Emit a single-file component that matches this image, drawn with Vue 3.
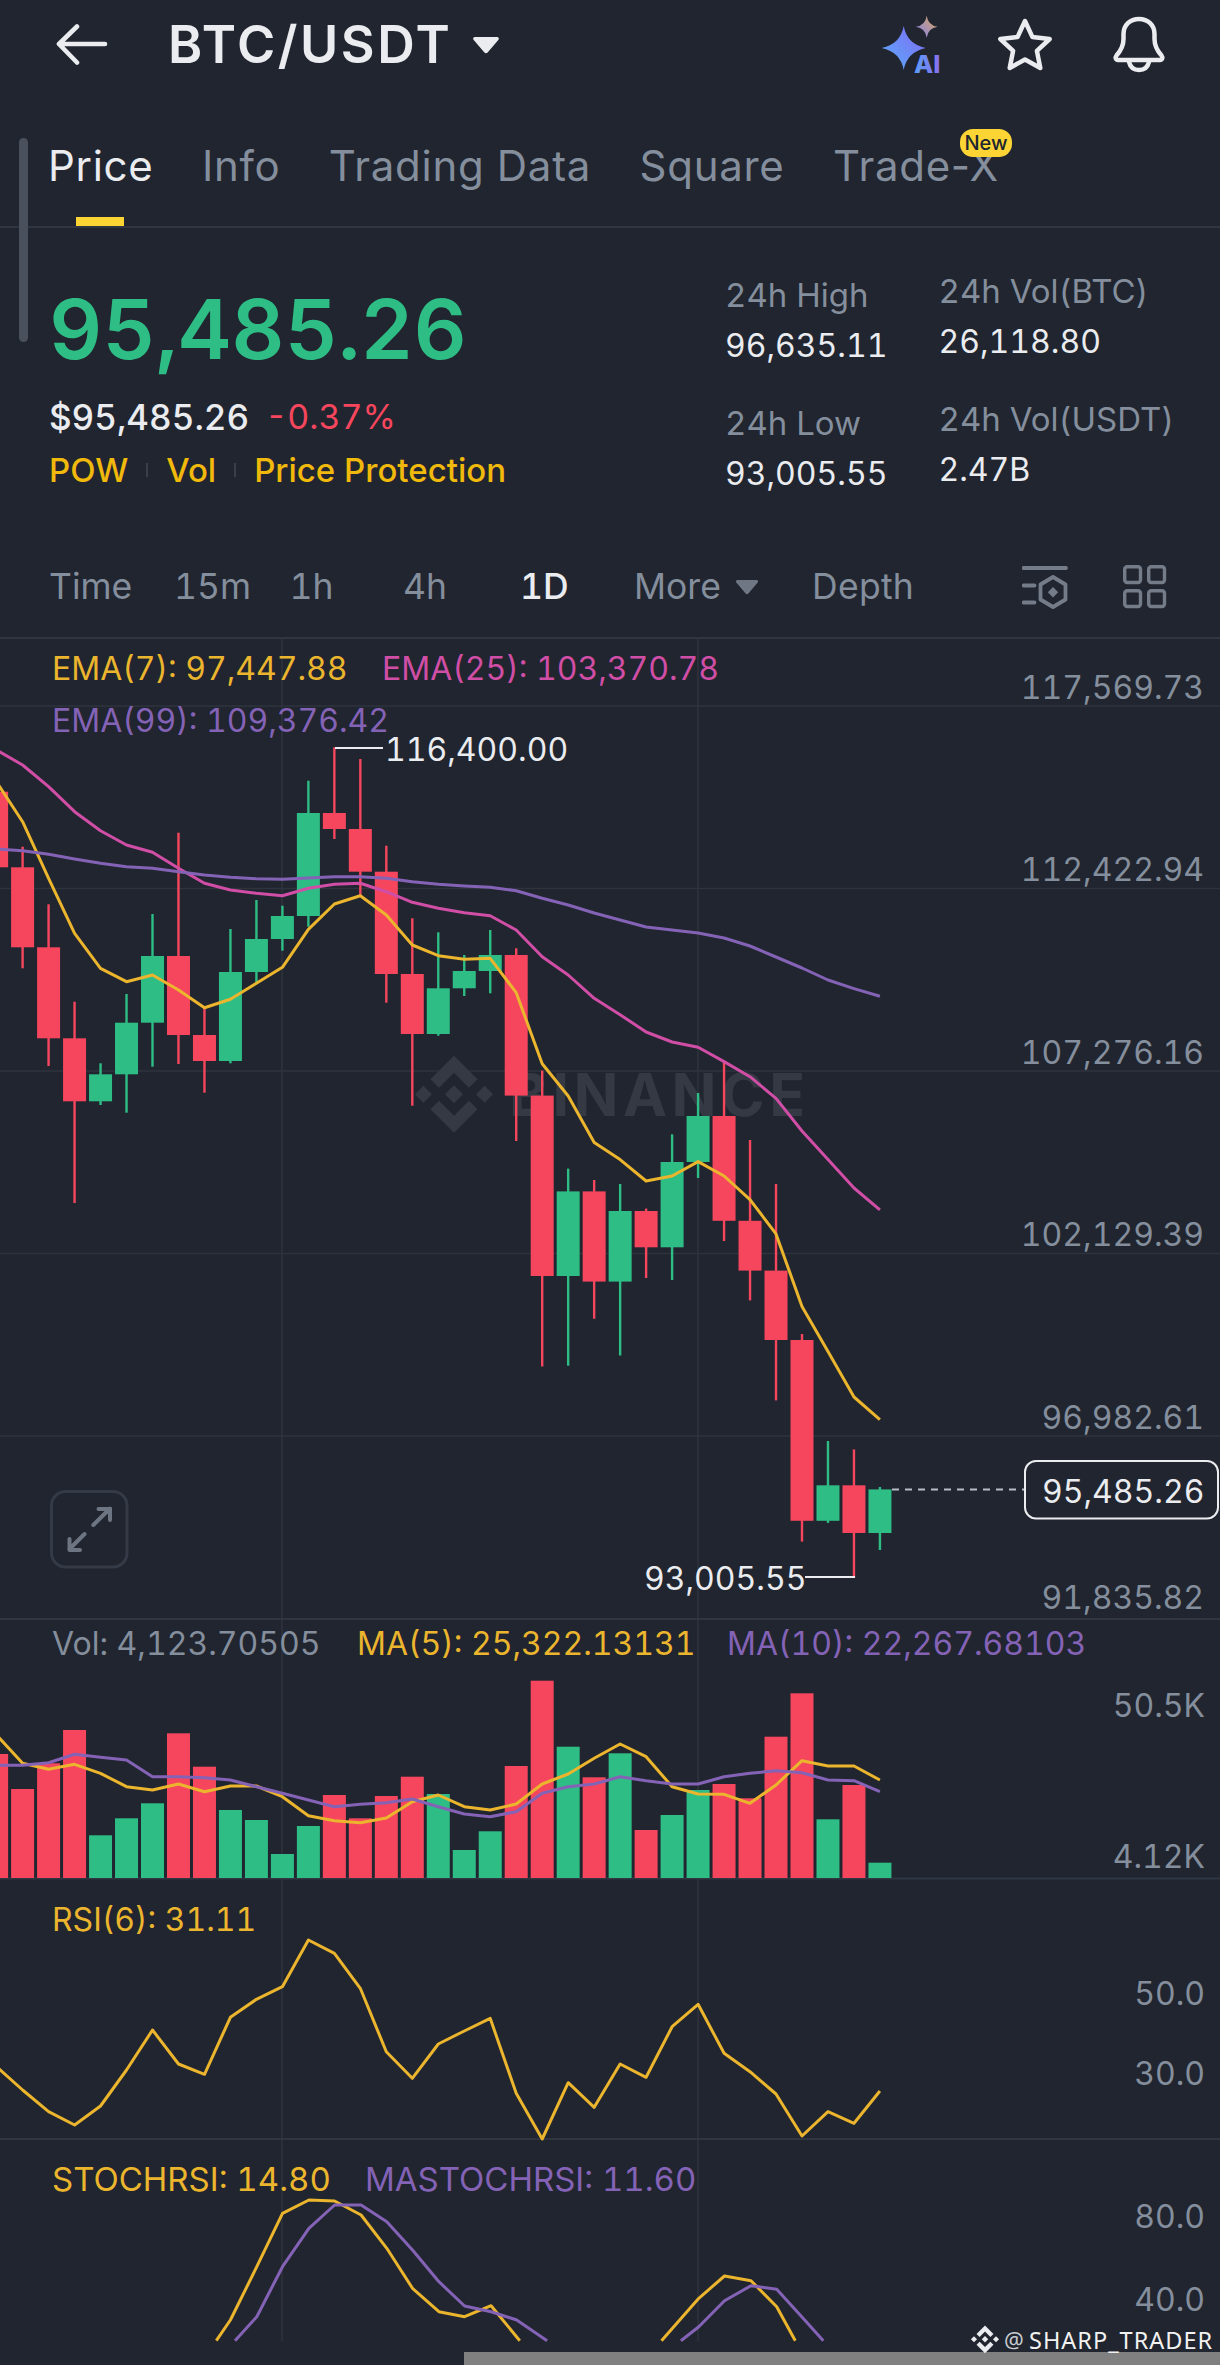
<script setup>
const X = i => 22.6 + 25.98 * (i - 1)
const red = 'r', green = 'g'
const candles = [
  [red, 783, 867, 791.7, 867.3, 1754],
  [red, 846.7, 968.3, 867.3, 947.3, 1789],
  [red, 904.3, 1066, 947.3, 1038.3, 1763.3],
  [red, 1001.7, 1203, 1038.3, 1101.3, 1730],
  [green, 1063.3, 1105, 1074.3, 1101.3, 1835.3],
  [green, 994, 1112.7, 1022.7, 1074.3, 1818.3],
  [green, 914, 1066.7, 956, 1022.7, 1803.3],
  [red, 832.7, 1064, 956, 1035, 1733.3],
  [red, 1006.7, 1092.7, 1035, 1061, 1766.7],
  [green, 929, 1063.3, 972, 1061, 1810],
  [green, 900, 983.3, 939, 972, 1820],
  [green, 905.7, 950.7, 916, 939, 1854],
  [green, 780.7, 926.7, 813, 916, 1826],
  [red, 747.3, 839, 813, 829, 1795],
  [red, 759, 896.7, 829, 871.7, 1818.3],
  [red, 845.7, 1002.7, 871.7, 974, 1796],
  [red, 918.3, 1105.7, 974, 1034, 1776.7],
  [green, 932.3, 1035.7, 988.3, 1034, 1794],
  [green, 955, 996, 971, 988.3, 1850],
  [green, 930, 993.3, 955, 971, 1831.3],
  [red, 948.3, 1141, 955, 1095.6, 1766],
  [red, 1070.6, 1366.5, 1095.6, 1276, 1680.7],
  [green, 1168.6, 1365.7, 1191.4, 1276, 1746.7],
  [red, 1180, 1318.8, 1191.4, 1281.6, 1777.3],
  [green, 1184, 1355.5, 1211, 1281.6, 1753.3],
  [red, 1208.6, 1278, 1211, 1247.3, 1830],
  [green, 1134.3, 1280, 1162, 1247.3, 1815],
  [green, 1093, 1178, 1116, 1162, 1790],
  [red, 1061.6, 1241, 1116, 1220.8, 1784],
  [red, 1140, 1300.4, 1220.8, 1270.6, 1798.3],
  [red, 1184, 1400.4, 1270.6, 1340, 1736.7],
  [red, 1334, 1541.6, 1340, 1520.8, 1693.3],
  [green, 1441, 1522.9, 1485.3, 1520.8, 1819.3],
  [red, 1449.4, 1578, 1485.3, 1533, 1785],
  [green, 1487, 1550, 1489.4, 1533, 1862.7]
].map(([kind, wickTop, wickBot, bodyTop, bodyBot, volTop], i) => ({
  kind, x: X(i), wickTop, wickBot, bodyTop, bodyH: bodyBot - bodyTop, volTop
}))

const series = ys => ys.map((y, i) => `${X(i).toFixed(1)},${y}`).join(' ')
const ema7 = series([782,821.7,878.3,933.3,968.3,981.7,975,990,1007.7,999.3,983.3,967.3,929.3,904,895.7,915,945,955.7,959.3,958.3,992.7,1063.7,1096,1142.4,1159.6,1181,1176,1161.6,1176,1199.6,1233.9,1306.5,1351.4,1397,1419.6])
const ema25 = series([750,765,786.7,811.7,830.7,845,852.3,868.3,883.3,890,893.3,895.7,888.3,884.3,883.3,891.7,902.3,908.3,912.7,915.7,930,956.7,975,998.3,1014.7,1032,1042,1047.3,1061.6,1076.7,1098.4,1131,1159.6,1188,1209.8])
const ema99 = series([849,850.7,854.3,859,863.3,866.7,868.3,871.7,875,877.3,878.7,879.3,878,876.7,876.7,878.3,881.7,884.3,886,887.3,890.7,898.3,905,913,920,927,930,933,938,946,957,968,980,988.6,996.3])

const volY = z => +(1610 + z / 3).toFixed(1)
const ma5 = series([375,460,478,463,490,530,540,522,545,528,528,560,617,632,638,624,575,555,590,600,582,522,492,445,402,440,530,552,553,580,525,452,468,468,510].map(volY))
const ma10 = series([466,466,458,433,442,450,500,500,503,510,530,550,570,590,583,578,567,590,612,620,605,550,530,522,500,512,522,522,500,490,482,488,510,512,545].map(volY))

const rsiY = z => +(1890 + z / 3).toFixed(1)
const rsi = series([530,600,665,705,648,540,420,522,553,382,328,290,150,190,295,485,565,462,423,385,610,747,578,652,522,562,410,343,490,545,612,738,665,700,603].map(rsiY))
const free = list => list.map(([x, z]) => `${(x / 1.285).toFixed(1)},${rsiY(z)}`).join(' ')
const stochA = free([[278,1352],[296,1290],[330,1130],[363,970],[397,930],[430,933],[464,975],[497,1075],[530,1195],[564,1265],[597,1280],[631,1247],[668,1352]])
const stochB = free([[302,1352],[330,1280],[363,1130],[397,1015],[430,945],[464,945],[497,995],[530,1080],[564,1175],[597,1248],[631,1265],[664,1290],[703,1352]])
const stochC = free([[850,1352],[898,1225],[931,1158],[965,1172],[998,1250],[1022,1352]])
const stochD = free([[875,1352],[898,1310],[931,1232],[965,1187],[998,1198],[1032,1285],[1058,1352]])

const gridY = [706, 888.5, 1071, 1253.5, 1436]
const dividers = [1619, 1878.5, 2139]
const priceAxis = [
  ['117,569.73', 698.7], ['112,422.94', 881.2], ['107,276.16', 1063.7],
  ['102,129.39', 1246.2], ['96,982.61', 1428.7], ['91,835.82', 1608.5]
]
const otherAxis = [
  ['50.5K', 1716.5], ['4.12K', 1868], ['50.0', 2005], ['30.0', 2085], ['80.0', 2228], ['40.0', 2310.5]
]
</script>

<template>
  <div class="page">
    <span class="scroll-thumb"></span>

    <header class="top">
      <svg class="back" width="52" height="42" viewBox="0 0 52 42" fill="none">
        <path d="M49 20H3M21 2.5L3 20l18 18.5" stroke="#eaecef" stroke-width="4.6" stroke-linecap="round" stroke-linejoin="round" />
      </svg>
      <h1 class="pair">BTC/USDT</h1>
      <svg class="caret" width="28" height="18" viewBox="0 0 28 18">
        <path d="M3 1h22c1.6 0 2.4 1.6 1.5 2.8L15.6 16.4c-.8 1-2.4 1-3.2 0L1.5 3.8C.6 2.6 1.4 1 3 1z" fill="#eaecef" />
      </svg>
      <div class="actions">
        <svg width="68" height="66" viewBox="0 0 68 66">
          <defs>
            <linearGradient id="aiBig" x1="1" y1="0" x2="0" y2="1">
              <stop offset="0" stop-color="#8468f6" />
              <stop offset="1" stop-color="#56aef8" />
            </linearGradient>
            <linearGradient id="aiSmall" x1="1" y1="0" x2="0" y2="1">
              <stop offset="0" stop-color="#e2a95e" />
              <stop offset="1" stop-color="#7d7ff0" />
            </linearGradient>
            <linearGradient id="aiText" x1="0" y1="0" x2="1" y2="0">
              <stop offset="0" stop-color="#5b9ef8" />
              <stop offset="1" stop-color="#8a70f0" />
            </linearGradient>
          </defs>
          <path d="M26.7 14Q30 32 48.7 36 30 40 26.7 58 23.4 40 4.7 36 23.4 32 26.7 14Z" fill="url(#aiBig)" />
          <path d="M49.7 3.7Q51 13.500 60.700 14.700 51 16 49.700 25.700 48.400 16 38.700 14.700 48.400 13.500 49.700 3.700Z" fill="url(#aiSmall)" />
          <text class="ai-text" x="37" y="61" fill="url(#aiText)">AI</text>
        </svg>
        <svg class="star" width="60" height="60" viewBox="0 0 60 60" fill="none">
          <path d="M30 4l7.35 15.9L54.7 22 41.9 33.9 45.3 51 30 42.5 14.7 51l3.4-17.1L5.3 22l17.35-2.1z" stroke="#eaecef" stroke-width="4.5" stroke-linejoin="round" />
        </svg>
        <svg class="bell" width="56" height="60" viewBox="0 0 56 60" fill="none">
          <path d="M7 45H49C51.5 45 52 42.5 50.5 40.5 46.5 36 43.5 31 43.5 24V19C43.5 10 37 4 28 4 19 4 12.5 10 12.5 19V24C12.5 31 9.5 36 5.5 40.5 4 42.5 4.5 45 7 45Z" stroke="#eaecef" stroke-width="4.5" stroke-linejoin="round" />
          <path d="M18 47C19.5 53 24 55 28 55 32 55 36.5 53 38 47" stroke="#eaecef" stroke-width="4.5" stroke-linecap="round" />
        </svg>
      </div>
    </header>

    <nav class="tabs">
      <span class="tab active">Price</span>
      <span class="tab">Info</span>
      <span class="tab">Trading Data</span>
      <span class="tab">Square</span>
      <span class="tab">Trade-X<em class="badge">New</em></span>
    </nav>

    <section class="summary">
      <div class="headline">
        <div class="last">95,485.26</div>
        <div class="sub"><span class="usd">$95,485.26</span><span class="pct">-0.37%</span></div>
        <div class="tags">
          <span>POW</span><i></i><span>Vol</span><i></i><span>Price Protection</span>
        </div>
      </div>
      <div class="stats">
        <dl class="stat-col first">
          <dt>24h High</dt><dd>96,635.11</dd>
          <dt class="lower">24h Low</dt><dd>93,005.55</dd>
        </dl>
        <dl class="stat-col second">
          <dt>24h Vol(BTC)</dt><dd>26,118.80</dd>
          <dt class="lower">24h Vol(USDT)</dt><dd>2.47B</dd>
        </dl>
      </div>
    </section>

    <div class="toolbar">
      <span>Time</span>
      <span>15m</span>
      <span>1h</span>
      <span>4h</span>
      <span class="on">1D</span>
      <span class="more">More
        <svg width="24" height="16" viewBox="0 0 24 16"><path d="M2.500 1h19c1.400 0 2 1.400 1.200 2.400L13.400 14.600c-.7.800-2.100.800-2.800 0L1.300 3.400C.5 2.400 1.100 1 2.500 1z" fill="#707784" /></svg>
      </span>
      <span class="depth">Depth</span>
      <svg width="46" height="44" viewBox="0 0 46 44" fill="none">
        <g stroke="#757c89" stroke-width="3.800" stroke-linecap="round">
          <path d="M1.500 3H44M1.500 20.500h11M1.500 37.500h11" />
          <path d="M31 12l12.500 7.500v15L31 42l-12.500-7.500v-15z" stroke-linejoin="round" />
        </g>
        <path d="M31 22l5.200 5.200L31 32.400l-5.200-5.200z" fill="#757c89" />
      </svg>
      <svg width="44" height="44" viewBox="0 0 44 44" fill="none" stroke="#757c89" stroke-width="3.400">
        <rect x="1.700" y="1.700" width="15.800" height="15.800" rx="2.500" />
        <rect x="25.700" y="1.700" width="15.800" height="15.800" rx="2.500" />
        <rect x="1.700" y="25.700" width="15.800" height="15.800" rx="2.500" />
        <rect x="25.700" y="25.700" width="15.800" height="15.800" rx="2.500" />
      </svg>
    </div>

    <svg class="chart" width="1220" height="1728" viewBox="0 637 1220 1728">
      <path d="M0 638H1220" class="divider" />
      <path v-for="y in gridY" :key="y" :d="`M0 ${y}H1220`" class="grid" />
      <path d="M282 638V2341M698 638V2341" class="grid" />
      <path v-for="y in dividers" :key="y" :d="`M0 ${y}H1220`" class="divider" />

      <g class="mark" transform="translate(454 1094.300)">
        <path d="M0-9L9 0 0 9-9 0zM-30.600-8.500L-22.100 0-30.600 8.500-39.100 0zM30.600-8.500L39.100 0 30.600 8.500 22.100 0zM0-38.500L23.500-15 15-6.500 0-21.500-15-6.500-23.500-15zM0 38.500L23.500 15 15 6.500 0 21.500-15 6.500-23.500 15z" />
      </g>
      <text class="mark-text" x="509" y="1116">BINANCE</text>

      <g v-for="(c, i) in candles" :key="i" :class="c.kind === 'r' ? 'down' : 'up'">
        <rect :x="c.x - 1.200" :y="c.wickTop" width="2.400" :height="c.wickBot - c.wickTop" />
        <rect :x="c.x - 11.500" :y="c.bodyTop" width="23" :height="c.bodyH" />
        <rect :x="c.x - 11.500" :y="c.volTop" width="23" :height="1878 - c.volTop" />
      </g>

      <polyline class="line yellow" :points="ema7" />
      <polyline class="line pink" :points="ema25" />
      <polyline class="line purple" :points="ema99" />
      <polyline class="line yellow" :points="ma5" />
      <polyline class="line purple" :points="ma10" />
      <polyline class="line yellow" :points="rsi" />
      <polyline class="line yellow" :points="stochA" />
      <polyline class="line purple" :points="stochB" />
      <polyline class="line yellow" :points="stochC" />
      <polyline class="line purple" :points="stochD" />

      <text class="legend f-yellow" x="52" y="680">EMA(7): 97,447.88</text>
      <text class="legend f-pink" x="382" y="680">EMA(25): 103,370.78</text>
      <text class="legend f-purple" x="52" y="732">EMA(99): 109,376.42</text>
      <text class="legend f-grey" x="52" y="1655">Vol: 4,123.70505</text>
      <text class="legend f-yellow" x="357" y="1655">MA(5): 25,322.13131</text>
      <text class="legend f-purple" x="727" y="1655">MA(10): 22,267.68103</text>
      <text class="legend f-yellow" x="52" y="1931">RSI(6): 31.11</text>
      <text class="legend wide f-yellow" x="52" y="2190.500">STOCHRSI: 14.80</text>
      <text class="legend wide f-purple" x="365" y="2190.500">MASTOCHRSI: 11.60</text>

      <text v-for="a in priceAxis" :key="a[0]" class="axis" x="1204" :y="a[1]">{{ a[0] }}</text>
      <text v-for="a in otherAxis" :key="a[0]" class="axis" x="1205" :y="a[1]">{{ a[0] }}</text>

      <path d="M335 748H383M805 1577H855" class="flag" />
      <text class="value" x="385" y="760.500">116,400.00</text>
      <text class="value" x="644" y="1590">93,005.55</text>

      <path d="M892 1489.500H1024" class="dash" />
      <rect x="1025" y="1461" width="193" height="57.500" rx="11" class="now-box" />
      <text class="value" x="1042" y="1502.500">95,485.26</text>

      <rect x="51.500" y="1491.500" width="75.500" height="75.500" rx="14" class="expand-box" />
      <path d="M93.300 1525L110 1508.500M98.500 1509H110V1520M84.500 1534L69.500 1549M69.500 1539V1550H80" class="expand" />

      <rect x="464" y="2352" width="756" height="13" fill="#808080" />
      <g class="wm-logo" transform="translate(985 2339.300) scale(.36)">
        <path d="M0-9L9 0 0 9-9 0zM-30.600-8.500L-22.100 0-30.600 8.500-39.100 0zM30.600-8.500L39.100 0 30.600 8.500 22.100 0zM0-38.500L23.500-15 15-6.500 0-21.500-15-6.500-23.500-15zM0 38.500L23.500 15 15 6.500 0 21.500-15 6.500-23.500 15z" />
      </g>
      <text class="wm-at" x="1004" y="2348">@</text>
      <text class="wm-name" x="1029" y="2348.500">SHARP_TRADER</text>
    </svg>
  </div>
</template>

<style>
html, body { margin: 0; background: #20252f; }
</style>

<style scoped>
.page {
  position: relative;
  width: 1220px;
  height: 2365px;
  overflow: hidden;
  background: #20252f;
  color: #eaecef;
  font-family: Inter, "Noto Sans", sans-serif;
  font-feature-settings: "tnum";
}
.scroll-thumb {
  position: absolute;
  left: 19px;
  top: 138px;
  width: 9px;
  height: 204px;
  border-radius: 5px;
  background: #4b515c;
  z-index: 1;
}
.top {
  display: flex;
  align-items: center;
  height: 90px;
  padding: 0 53px 0 56px;
  box-sizing: border-box;
}
.back { margin-right: 60px; }
.pair {
  margin: 0;
  font-size: 52px;
  line-height: 60px;
  font-weight: 600;
  letter-spacing: 2.5px;
  color: #eaecef;
  font-feature-settings: normal;
}
.caret { margin-left: 20px; }
.actions {
  display: flex;
  align-items: center;
  margin-left: auto;
}
.star { position: relative; top: 2px; margin-left: 50px; }
.bell { margin-left: 56px; }
.tabs {
  display: flex;
  gap: 48.500px;
  height: 138px;
  padding: 51px 0 0 48px;
  box-sizing: border-box;
  border-bottom: 2px solid #2f3642;
  font-feature-settings: normal;
}
.tab {
  position: relative;
  font-size: 42px;
  line-height: 50px;
  letter-spacing: .7px;
  font-weight: 400;
  color: #848e9c;
}
.tab.active { color: #eaecef; }
.tab.active::after {
  content: "";
  position: absolute;
  left: 28px;
  top: 76px;
  width: 48px;
  height: 9px;
  background: #fcd535;
}
.badge {
  position: absolute;
  left: 127px;
  top: -12px;
  width: 52px;
  height: 28px;
  border-radius: 13px;
  background: #fcd535;
  color: #202630;
  font-size: 20px;
  line-height: 28px;
  letter-spacing: 0;
  font-style: normal;
  font-weight: 500;
  text-align: center;
}
.summary {
  display: flex;
  justify-content: space-between;
  height: 320px;
  padding-left: 49px;
  box-sizing: border-box;
}
.headline { padding-top: 59px; }
.last {
  font-size: 82.500px;
  line-height: 84px;
  font-weight: 600;
  color: #2ebd85;
}
.sub {
  display: flex;
  gap: 16px;
  margin-top: 26px;
  font-size: 35px;
  line-height: 40px;
  font-weight: 500;
}
.pct { color: #f6465d; font-weight: 400; font-size: 34px; }
.tags {
  display: flex;
  align-items: center;
  margin-top: 15px;
  font-size: 33px;
  line-height: 36px;
  font-weight: 500;
  color: #f0b90b;
}
.tags i {
  width: 2px;
  height: 14px;
  margin: 0 18px;
  background: #3a404b;
}
.stats {
  display: grid;
  grid-template-columns: 213.500px 281.500px;
}
dl { margin: 0; }
.stat-col.first { padding-top: 49px; }
.stat-col.second { padding-top: 45px; }
dt {
  font-size: 33px;
  line-height: 36px;
  color: #848e9c;
}
dt.lower { margin-top: 41px; }
dd {
  margin: 15px 0 0;
  font-size: 32px;
  line-height: 36px;
  color: #eaecef;
}
.toolbar {
  display: grid;
  grid-template-columns: 125px 115.500px 113.500px 117px 114px 178px 209.700px 101.300px 44px;
  align-items: center;
  height: 78px;
  margin-bottom: 11px;
  padding-left: 49px;
  box-sizing: border-box;
  font-size: 35.500px;
  line-height: 44px;
  color: #848e9c;
}
.toolbar .on { color: #eaecef; font-weight: 500; }
.more { display: flex; align-items: center; gap: 14px; }
.depth { letter-spacing: .3px; }
.chart { display: block; }
.grid { stroke: #2e333e; stroke-width: 1.500; fill: none; }
.divider { stroke: #2f3642; stroke-width: 2; fill: none; }
.mark path { fill: #343943; }
.mark-text {
  font-size: 59px;
  font-weight: 700;
  letter-spacing: 4.500px;
  fill: #343943;
}
.up rect { fill: #2ebd85; }
.down rect { fill: #f6465d; }
.line { fill: none; stroke-width: 3; stroke-linejoin: round; }
.yellow { stroke: #ecb52e; }
.pink { stroke: #d04ea6; }
.purple { stroke: #8463b6; }
.legend { font-size: 32px; }
.legend.wide { font-size: 33px; }
.f-yellow { fill: #ecb52e; }
.f-pink { fill: #d04ea6; }
.f-purple { fill: #8463b6; }
.f-grey { fill: #848e9c; }
.axis { font-size: 32px; fill: #848e9c; text-anchor: end; }
.flag { stroke: #eaecef; stroke-width: 2; fill: none; }
.value { font-size: 32px; fill: #eaecef; }
.dash { stroke: #b7bdc6; stroke-width: 2; stroke-dasharray: 7 6; fill: none; }
.now-box { fill: #20252f; stroke: #eaecef; stroke-width: 2; }
.expand-box { fill: none; stroke: #343a46; stroke-width: 3; }
.expand { fill: none; stroke: #6e7582; stroke-width: 4; stroke-linecap: round; stroke-linejoin: round; }
.ai-text { font-size: 25px; font-weight: 800; }
.wm-logo path { fill: #eaecef; }
.wm-at { font-family: "Noto Sans", sans-serif; font-size: 22px; fill: #c9ccd1; }
.wm-name { font-family: "Noto Sans", sans-serif; font-size: 23.500px; letter-spacing: 1px; fill: #f2f2f2; }
</style>
